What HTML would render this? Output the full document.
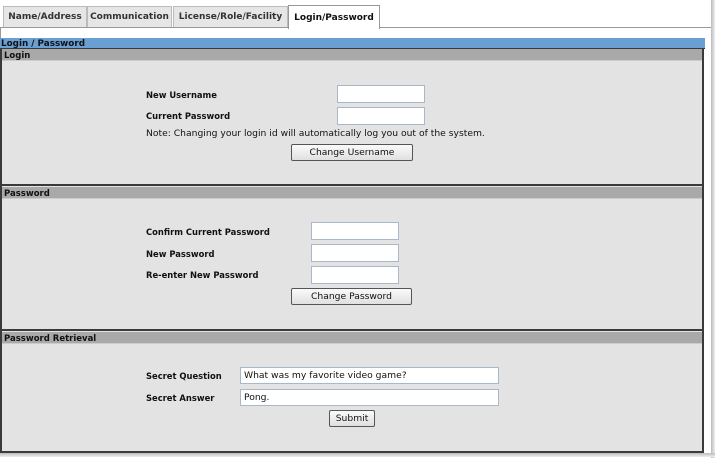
<!DOCTYPE html>
<html><head><meta charset="utf-8"><style>
body{margin:0;width:722px;height:467px;background:#fff;position:relative;overflow:hidden;font-family:"DejaVu Sans","Liberation Sans",sans-serif;font-size:9.2px;color:#111}
.a{position:absolute}
.tab{position:absolute;top:6px;height:20px;background:#e6e6e6;border:1px solid #bbb;border-bottom:none;font-weight:bold;font-size:9px;line-height:21px;text-align:center;color:#333;white-space:nowrap}
.hdr{position:absolute;left:2px;width:700px;height:12px;background:#a9a9a9;border-bottom:1px solid #ccc;font-weight:bold;font-size:8.5px;line-height:14px;padding-left:2px;box-sizing:border-box}
.sec{position:absolute;left:0;width:704px;background:#e3e3e3;border:2px solid #3a3a3a;border-top:1px solid #3a3a3a;box-sizing:border-box}
.lbl{position:absolute;left:146px;font-weight:bold;font-size:8.4px;line-height:12px}
.in{position:absolute;background:#fff;border:1px solid #a9b8c8;box-sizing:border-box;height:18px;font-size:9.2px;line-height:16px;padding-left:3px}
.btn{position:absolute;background:linear-gradient(#fafafa,#e0e0e0);border:1px solid #555;border-radius:2px;box-sizing:border-box;height:17px;text-align:center;line-height:15px;font-size:9.2px}
</style></head><body>
<div class="a" style="left:711px;top:0;width:4px;height:458px;background:linear-gradient(90deg,#bbb,#eee)"></div>
<div class="a" style="left:0;top:453px;width:715px;height:4px;background:linear-gradient(#bbb,#eee)"></div>
<div class="a" style="left:0;top:27px;width:711px;height:1px;background:#999"></div>
<div class="a" style="left:0;top:27px;width:1px;height:12px;background:#999"></div>
<div class="tab" style="left:3px;width:82px">Name/Address</div>
<div class="tab" style="left:87px;width:83px">Communication</div>
<div class="tab" style="left:173px;width:113px">License/Role/Facility</div>
<div class="tab" style="left:288px;top:5px;width:90px;height:23px;background:#fff;border-color:#999;line-height:25px;color:#111">Login/Password</div>
<div class="a" style="left:0;top:38px;width:704px;height:10px;background:#6a9fd3;font-weight:bold;font-size:8.8px;line-height:12px;padding-left:1px;border-bottom:1px solid #333">Login / Password</div>
<div class="sec" style="top:48px;height:138px"></div>
<div class="hdr" style="top:49px">Login</div>
<div class="sec" style="top:185px;height:146px"></div>
<div class="hdr" style="top:187px">Password</div>
<div class="sec" style="top:330px;height:123px"></div>
<div class="hdr" style="top:332px">Password Retrieval</div>

<div class="lbl" style="top:89px">New Username</div>
<div class="lbl" style="top:110px">Current Password</div>
<div class="a" style="left:146px;top:128px;line-height:12px">Note: Changing your login id will automatically log you out of the system.</div>
<div class="in" style="left:337px;top:85px;width:88px"></div>
<div class="in" style="left:337px;top:107px;width:88px"></div>
<div class="btn" style="left:291px;top:144px;width:122px">Change Username</div>

<div class="lbl" style="top:226px">Confirm Current Password</div>
<div class="lbl" style="top:248px">New Password</div>
<div class="lbl" style="top:269px">Re-enter New Password</div>
<div class="in" style="left:311px;top:222px;width:88px"></div>
<div class="in" style="left:311px;top:244px;width:88px"></div>
<div class="in" style="left:311px;top:266px;width:88px"></div>
<div class="btn" style="left:291px;top:288px;width:121px">Change Password</div>

<div class="lbl" style="top:370px">Secret Question</div>
<div class="lbl" style="top:392px">Secret Answer</div>
<div class="in" style="left:240px;top:367px;width:259px;height:17px">What was my favorite video game?</div>
<div class="in" style="left:240px;top:389px;width:259px;height:17px">Pong.</div>
<div class="btn" style="left:329px;top:410px;width:46px">Submit</div>
</body></html>
